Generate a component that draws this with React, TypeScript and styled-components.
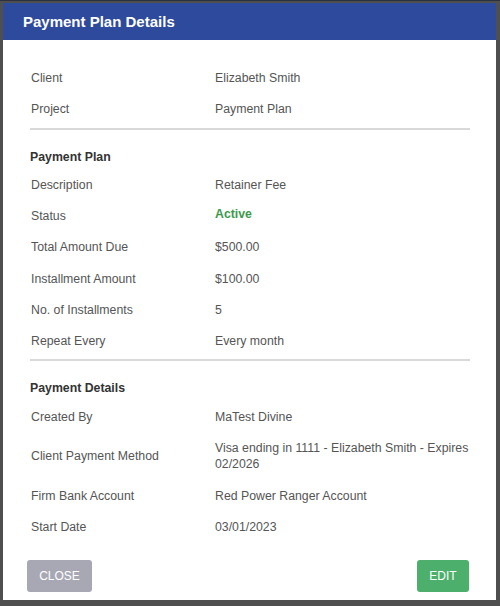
import styled, { createGlobalStyle } from "styled-components";

const GlobalStyle = createGlobalStyle`
  html, body {
    margin: 0;
    padding: 0;
    background: #4f4f4f;
  }
  body {
    font-family: "Liberation Sans", Arial, sans-serif;
  }
`;

type Row = { label: string; value: string; tone?: "active"; tall?: boolean };

const topRows: Row[] = [
  { label: "Client", value: "Elizabeth Smith" },
  { label: "Project", value: "Payment Plan" },
];

const planRows: Row[] = [
  { label: "Description", value: "Retainer Fee" },
  { label: "Status", value: "Active", tone: "active" },
  { label: "Total Amount Due", value: "$500.00" },
  { label: "Installment Amount", value: "$100.00" },
  { label: "No. of Installments", value: "5" },
  { label: "Repeat Every", value: "Every month" },
];

const detailRows: Row[] = [
  { label: "Created By", value: "MaTest Divine" },
  {
    label: "Client Payment Method",
    value: "Visa ending in 1111 - Elizabeth Smith - Expires 02/2026",
    tall: true,
  },
  { label: "Firm Bank Account", value: "Red Power Ranger Account" },
  { label: "Start Date", value: "03/01/2023" },
];

const Rows = ({ rows }: { rows: Row[] }) => (
  <>
    {rows.map((r) => (
      <DetailRow key={r.label} $tall={r.tall}>
        <Label>{r.label}</Label>
        <Value $active={r.tone === "active"}>{r.value}</Value>
      </DetailRow>
    ))}
  </>
);

export default function App() {
  return (
    <>
      <GlobalStyle />
      <Backdrop>
        <Modal>
          <Header>Payment Plan Details</Header>
          <Body>
            <Rows rows={topRows} />
            <Divider />
            <SectionTitle>Payment Plan</SectionTitle>
            <Rows rows={planRows} />
            <Divider />
            <SectionTitle>Payment Details</SectionTitle>
            <Rows rows={detailRows} />
          </Body>
          <Footer>
            <Button $variant="close">CLOSE</Button>
            <Button $variant="edit">EDIT</Button>
          </Footer>
        </Modal>
      </Backdrop>
    </>
  );
}

const Backdrop = styled.div`
  width: 500px;
  height: 606px;
  box-sizing: border-box;
  padding: 3px 4px 5px 3px;
  border-top: 1px solid #2b3140;
  background: #4f4f4f;
`;

const Modal = styled.div`
  height: 597px;
  margin-top: -1px;
  background: #ffffff;
  display: flex;
  flex-direction: column;
`;

const Header = styled.div`
  height: 37px;
  box-sizing: border-box;
  padding: 0 20px;
  display: flex;
  align-items: center;
  background: #2e4a9d;
  color: #ffffff;
  font-size: 15px;
  font-weight: 700;
`;

const Body = styled.div`
  padding: 22.5px 26px 0 27px;
  display: flex;
  flex-direction: column;
`;

const DetailRow = styled.div<{ $tall?: boolean }>`
  display: grid;
  grid-template-columns: 184px 1fr;
  align-items: center;
  min-height: 31.1px;
  padding: ${(p) => (p.$tall ? "8px 0 8px 1px" : "0 0 0 1px")};
  font-size: 12.3px;
  line-height: 16px;
  color: #555555;
`;

const Label = styled.div``;

const Value = styled.div<{ $active?: boolean }>`
  margin-right: -8px;
  color: ${(p) => (p.$active ? "#3d9a4c" : "#555555")};
  font-weight: ${(p) => (p.$active ? 700 : 400)};
  margin-top: ${(p) => (p.$active ? "-4px" : "0")};
`;

const Divider = styled.div`
  height: 2px;
  margin: 3px 0 18px;
  background: #d9d9d9;
`;

const SectionTitle = styled.div`
  height: 18px;
  margin-bottom: 4px;
  display: flex;
  align-items: center;
  font-size: 12.3px;
  font-weight: 700;
  color: #333333;
`;

const Footer = styled.div`
  margin-top: auto;
  padding: 0 27px 8px 24px;
  display: flex;
  justify-content: space-between;
  align-items: center;
`;

const Button = styled.button<{ $variant: "close" | "edit" }>`
  height: 32px;
  padding: 0;
  width: ${(p) => (p.$variant === "close" ? "65px" : "52px")};
  border: none;
  border-radius: 3px;
  background: ${(p) => (p.$variant === "close" ? "#a8a8b4" : "#4caf6c")};
  color: #ffffff;
  font-family: "Liberation Sans", Arial, sans-serif;
  font-size: 12px;
  font-weight: 400;
  cursor: pointer;
`;
